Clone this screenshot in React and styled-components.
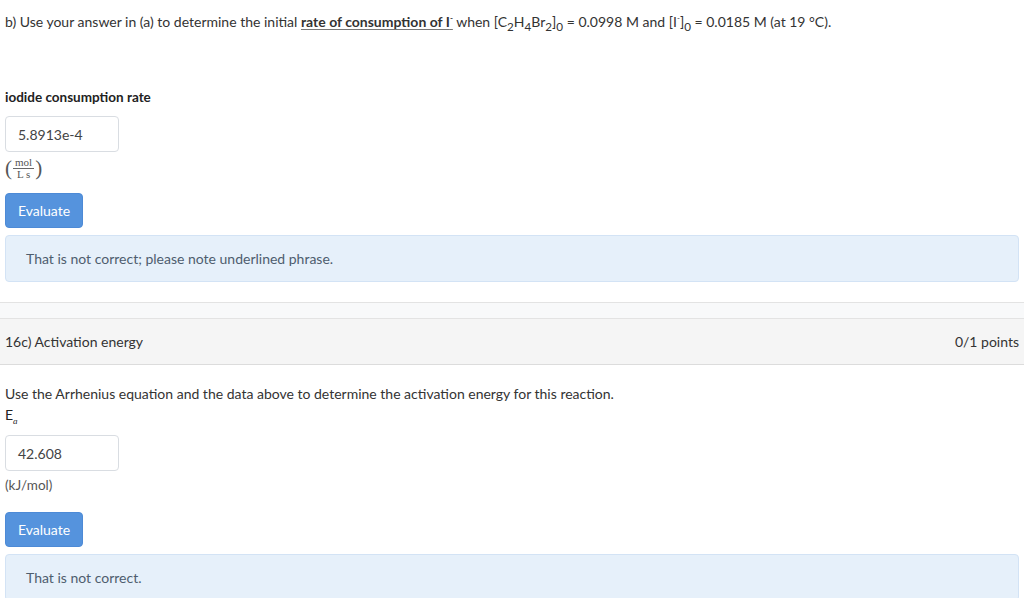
import React from "react";
import styled, { createGlobalStyle } from "styled-components";

const Global = createGlobalStyle`
  html, body { margin: 0; padding: 0; background: #fff; }
  body { font-family: "Lato", "Noto Sans", sans-serif; color: #333; font-size: 14px; }
  * { box-sizing: border-box; }
  sub, sup { line-height: 0; }
`;

const Page = styled.div`
  width: 1024px;
  height: 598px;
  overflow: hidden;
`;

const Section = styled.div`
  padding: 0 5px;
  display: flex;
  flex-direction: column;
  align-items: flex-start;
`;

const Prompt = styled.p`
  margin: ${(p) => p.$m || "0"};
  line-height: 18px;
  font-size: 14px;
  color: #333;
`;

const Emph = styled.span`
  font-weight: 700;
  text-decoration: underline;
  text-underline-offset: 2px;
  text-decoration-color: #777;
`;

const Sup = styled.sup`
  font-size: 8px;
`;

const Label = styled.div`
  margin-top: ${(p) => p.$mt || "0"};
  font-weight: ${(p) => (p.$bold ? 700 : 400)};
  font-size: ${(p) => (p.$bold ? "13.5px" : "14px")};
  line-height: 18px;
  color: #222;
`;

const ItalicSub = styled.sub`
  font-family: "Liberation Serif", serif;
  font-style: italic;
  font-size: 9px;
`;

const Input = styled.div`
  margin-top: ${(p) => p.$mt || "0"};
  width: 114px;
  height: 36px;
  border: 1px solid #d9dde2;
  border-radius: 4px;
  padding: 0 12px;
  display: flex;
  align-items: center;
  font-size: 14px;
  color: #444;
`;

const Units = styled.div`
  margin-top: ${(p) => p.$mt || "0"};
  font-size: 13.5px;
  color: #555;
  line-height: 16px;
`;

const FracWrap = styled.div`
  margin-top: 4px;
  display: flex;
  align-items: center;
  font-family: "Liberation Serif", "DejaVu Serif", serif;
  color: #555;
  gap: 1px;
`;

const Paren = styled.span`
  font-size: 21px;
  line-height: 24px;
`;

const Frac = styled.span`
  display: inline-flex;
  flex-direction: column;
  align-items: center;
  font-size: 11px;
  line-height: 11px;
`;

const Num = styled.span`
  border-bottom: 1px solid #666;
  padding: 0 2px;
`;

const Button = styled.button`
  margin-top: ${(p) => p.$mt || "0"};
  width: 78px;
  height: 35px;
  background: #5593dd;
  border: 1px solid #4d8ad6;
  border-radius: 4px;
  color: #fff;
  font-family: inherit;
  font-size: 14px;
  padding: 0;
`;

const Alert = styled.div`
  margin-top: 7px;
  align-self: stretch;
  height: 47px;
  background: #e6f0fa;
  border: 1px solid #d3e3f5;
  border-radius: 4px;
  padding: 0 20px;
  display: flex;
  align-items: center;
  font-size: 14px;
  color: #4e5d6e;
`;

const Divider = styled.div`
  margin-top: 20px;
  height: 17px;
  background: #f8f9fa;
  border-top: 1px solid #e3e3e3;
  border-bottom: 1px solid #e3e3e3;
`;

const CardHeader = styled.div`
  height: 46px;
  background: #f5f5f5;
  border-bottom: 1px solid #dcdcdc;
  display: flex;
  align-items: center;
  justify-content: space-between;
  padding: 0 5px;
  font-size: 14px;
  color: #333;
`;

export default function App() {
  return (
    <Page>
      <Global />
      <Section>
        <Prompt $m="13px 0 0">
          b) Use your answer in (a) to determine the initial{" "}
          <Emph>
            rate of consumption of I<Sup>-</Sup>
          </Emph>{" "}
          when [C<sub>2</sub>H<sub>4</sub>Br<sub>2</sub>]<sub>0</sub> = 0.0998 M and [I<Sup>-</Sup>]<sub>0</sub> = 0.0185 M (at 19 °C).
        </Prompt>
        <Label $bold $mt="57px">iodide consumption rate</Label>
        <Input $mt="10px">5.8913e-4</Input>
        <FracWrap>
          <Paren>(</Paren>
          <Frac>
            <Num>mol</Num>
            <span>L s</span>
          </Frac>
          <Paren>)</Paren>
        </FracWrap>
        <Button $mt="13px">Evaluate</Button>
        <Alert>That is not correct; please note underlined phrase.</Alert>
      </Section>
      <Divider />
      <CardHeader>
        <span>16c) Activation energy</span>
        <span>0/1 points</span>
      </CardHeader>
      <Section>
        <Prompt $m="20px 0 0">Use the Arrhenius equation and the data above to determine the activation energy for this reaction.</Prompt>
        <Label $mt="3px">
          E<ItalicSub>a</ItalicSub>
        </Label>
        <Input $mt="11px">42.608</Input>
        <Units $mt="6px">(kJ/mol)</Units>
        <Button $mt="19px">Evaluate</Button>
        <Alert>That is not correct.</Alert>
      </Section>
    </Page>
  );
}
